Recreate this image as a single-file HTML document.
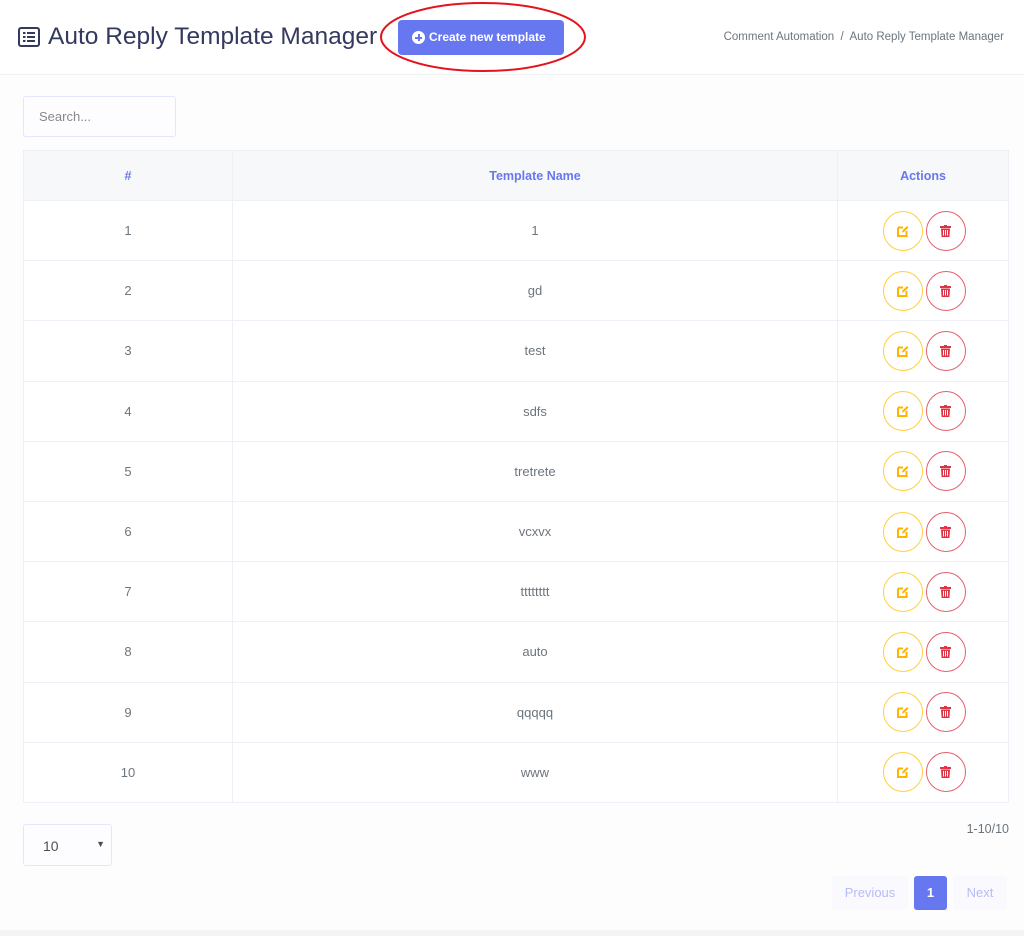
<!DOCTYPE html>
<html><head><style>
*{box-sizing:border-box;margin:0;padding:0}
body{width:1024px;height:936px;background:#fdfdfd;font-family:"Liberation Sans",sans-serif;position:relative;overflow:hidden}
.hdr{position:absolute;left:0;top:0;width:1024px;height:75px;background:#fff;border-bottom:1px solid #eef0f4}
h1{position:absolute;left:48px;top:23px;font-size:24.5px;font-weight:normal;color:#34395e;letter-spacing:0}
.btn{position:absolute;left:398px;top:20px;width:166px;height:35px;background:#6777ef;border-radius:4px;color:#fff;font-size:12px;font-weight:bold;line-height:35px;padding-left:31px}
.btn .pl{position:absolute;left:14px;top:11px;width:13px;height:13px;border-radius:50%;background:#fff}
.btn .pl:before{content:"";position:absolute;left:3px;top:5.5px;width:7px;height:2px;background:#6777ef}
.btn .pl:after{content:"";position:absolute;left:5.5px;top:3px;width:2px;height:7px;background:#6777ef}
.bc{position:absolute;right:20px;top:31px;font-size:11.5px;color:#6c757d}
.search{position:absolute;left:23px;top:96px;width:153px;height:41px;border:1px solid #e4e6fc;background:#fdfdff;border-radius:3px;font-size:13px;color:#888;padding:12px 15px}
table{position:absolute;left:23px;top:150px;width:986px;border-collapse:collapse;font-size:13px;color:#6c757d}
th{height:50px;background:#f7f8fa;color:#6777ef;font-size:12.5px;border:1px solid #eef0f8}
td{height:60.2px;text-align:center;border:1px solid #eef0f8;background:#fff}
td:last-child{padding-left:2px}
.c{display:inline-flex;align-items:center;justify-content:center;width:40px;height:40px;border-radius:50%;vertical-align:middle;margin:0 1.5px}
.e{border:1px solid #ffcf3f}
.d{border:1px solid #e4606d}
.sel{position:absolute;left:23px;top:824px;width:89px;height:42px;border:1px solid #e4e6fc;background:#fdfdff;border-radius:3px;font-size:14px;color:#495057;padding:13px 19px}
.sel span{position:absolute;right:6px;top:14px;font-size:9px}
.cnt{position:absolute;right:15px;top:822px;font-size:12.5px;color:#6c757d}
.pg{position:absolute;top:876px;height:34px;font-size:13px;line-height:34px;text-align:center;border-radius:3px}
.foot{position:absolute;left:0;top:930px;width:1024px;height:6px;background:#f4f4f4}
</style></head><body>
<div class="hdr">
<svg style="position:absolute;left:18px;top:27px" width="22" height="20" viewBox="0 0 22 20"><rect x="1" y="1" width="20" height="18" rx="2" fill="none" stroke="#34395e" stroke-width="2"/><g fill="#34395e"><rect x="5" y="5" width="2.5" height="2"/><rect x="9" y="5" width="8" height="2"/><rect x="5" y="9" width="2.5" height="2"/><rect x="9" y="9" width="8" height="2"/><rect x="5" y="13" width="2.5" height="2"/><rect x="9" y="13" width="8" height="2"/></g></svg>
<h1>Auto Reply Template Manager</h1>
<div class="btn"><span class="pl"></span>Create new template</div>
<div class="bc">Comment Automation &nbsp;/&nbsp; Auto Reply Template Manager</div>
</div>
<svg style="position:absolute;left:0;top:0" width="1024" height="80"><ellipse cx="483" cy="37" rx="102" ry="34" fill="none" stroke="#e3141e" stroke-width="2"/></svg>
<div class="search">Search...</div>
<table>
<tr><th style="width:209px">#</th><th>Template Name</th><th style="width:171px">Actions</th></tr>
<tr><td>1</td><td>1</td><td>ACT</td></tr>
<tr><td>2</td><td>gd</td><td>ACT</td></tr>
<tr><td>3</td><td>test</td><td>ACT</td></tr>
<tr><td>4</td><td>sdfs</td><td>ACT</td></tr>
<tr><td>5</td><td>tretrete</td><td>ACT</td></tr>
<tr><td>6</td><td>vcxvx</td><td>ACT</td></tr>
<tr><td>7</td><td>tttttttt</td><td>ACT</td></tr>
<tr><td>8</td><td>auto</td><td>ACT</td></tr>
<tr><td>9</td><td>qqqqq</td><td>ACT</td></tr>
<tr><td>10</td><td>www</td><td>ACT</td></tr>
</table>
<script>
var a='<span class="c e"><svg width="12" height="12" viewBox="0 0 12 12"><path d="M1 2.5h5M1 2.5v8.5h8.5V6" fill="none" stroke="#ffb400" stroke-width="2"/><path d="M5 7.5l0.5-2L10 1l1.5 1.5L7 7z" fill="#ffb400"/></svg></span><span class="c d"><svg width="11" height="12" viewBox="0 0 11 12"><rect x="0" y="1" width="11" height="2" fill="#dc3545"/><rect x="4" y="0" width="3" height="1.5" fill="#dc3545"/><path d="M1 3.5h9l-0.6 8.5H1.6z" fill="#dc3545"/><g fill="#fff"><rect x="3" y="5" width="1" height="5.5"/><rect x="5" y="5" width="1" height="5.5"/><rect x="7" y="5" width="1" height="5.5"/></g></svg></span>';
document.querySelectorAll('td').forEach(function(t){if(t.textContent=='ACT')t.innerHTML=a;});
</script>
<div class="sel">10<span>▼</span></div>
<div class="cnt">1-10/10</div>
<div class="pg" style="left:832px;width:76px;background:#f9f9fe;color:#b7bdf5">Previous</div>
<div class="pg" style="left:914px;width:33px;background:#6777ef;color:#fff;font-weight:bold">1</div>
<div class="pg" style="left:953px;width:54px;background:#f9f9fe;color:#b7bdf5">Next</div>
<div class="foot"></div>
</body></html>
